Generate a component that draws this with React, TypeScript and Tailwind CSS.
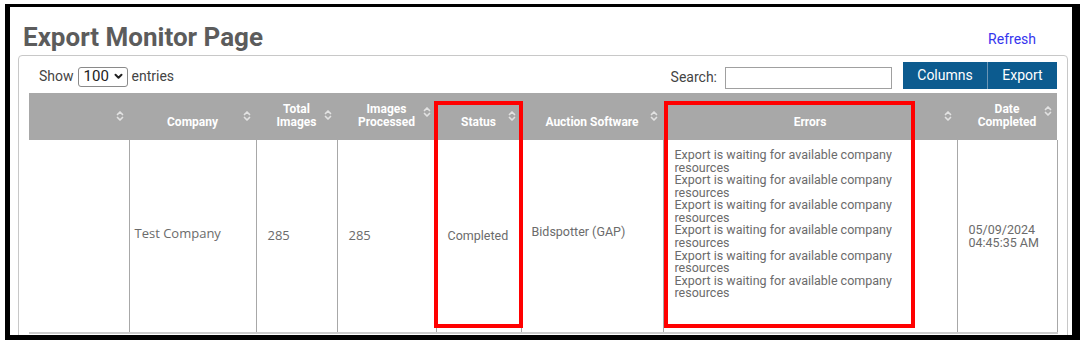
import React from "react";

const SortIcon = ({ top }: { top: number }) => (
  <svg
    width="8"
    height="12"
    viewBox="0 0 8 12"
    className="absolute right-[5px]"
    style={{ top }}
    fill="none"
    stroke="#e2e2e2"
    strokeWidth="1.7"
    strokeLinecap="round"
    strokeLinejoin="round"
  >
    <path d="M1.5 4.5 L4 2 L6.5 4.5" />
    <path d="M1.5 7.5 L4 10 L6.5 7.5" />
  </svg>
);

type Col = { label: React.ReactNode; w: number; icon: number };

const cols: Col[] = [
  { label: "", w: 100, icon: 23 },
  { label: "Company", w: 127, icon: 23 },
  { label: <>Total<br />Images</>, w: 81, icon: 22 },
  { label: <>Images<br />Processed</>, w: 99, icon: 19 },
  { label: "Status", w: 85, icon: 23 },
  { label: "Auction Software", w: 142, icon: 23 },
  { label: "Errors", w: 294, icon: 23 },
  { label: <>Date<br />Completed</>, w: 100, icon: 18 },
];

export default function App() {
  const errors = Array.from({ length: 6 });
  return (
    <div className="w-[1084px] h-[342px] bg-white pt-[4px] pl-[5px] overflow-hidden">
      <div
        className="relative w-[1075px] h-[336px] border-black border-l-[5px] border-t-[3px] border-r-[8px] border-b-[5px] overflow-hidden bg-white"
        style={{ fontFamily: "Roboto, 'Liberation Sans', sans-serif" }}
      >
        {/* Title row */}
        <div className="flex items-baseline justify-between pl-[13px] pr-[36px] pt-[15px]">
          <h1 className="text-[26px] font-bold leading-[30px] text-[#5c5c5c]">
            Export Monitor Page
          </h1>
          <a className="relative -top-[2px] text-[14px] text-[#3535ee] leading-[16px] cursor-pointer">Refresh</a>
        </div>

        {/* Panel */}
        <div className="mt-[3px] ml-[8px] w-[1050px] h-[300px] border border-[#c8c8c8] rounded-[4px] px-[10px] pt-[6px]">
          <div className="flex items-end justify-between h-[27px] mb-[4px]">
            <div className="flex items-center pl-[10px] pb-[2px] text-[14px] text-[#444]">
              <span>Show</span>
              <div className="ml-[4px] flex items-center justify-between w-[50px] h-[20px] border border-[#8a8a8a] rounded-[3px] pl-[5px] pr-[4px] text-[#222] text-[15px]">
                <span>100</span>
                <svg width="9" height="7" viewBox="0 0 9 7" fill="none" stroke="#222" strokeWidth="2" strokeLinecap="round" strokeLinejoin="round">
                  <path d="M1.5 1.8 L4.5 4.8 L7.5 1.8" />
                </svg>
              </div>
              <span className="ml-[4px]">entries</span>
            </div>
            <div className="flex items-end">
              <span className="text-[14px] text-[#444] mb-[1px]">Search:</span>
              <div className="ml-[8px] w-[167px] h-[22px] border border-[#a0a0a0] bg-white" />
              <div className="ml-[11px] flex h-[27px]">
                <div className="w-[84px] h-full bg-[#0c5b8f] text-white text-[14px] flex items-center justify-center">
                  Columns
                </div>
                <div className="w-[70px] h-full bg-[#0c5b8f] border-l border-[#6a95b5] text-white text-[14px] flex items-center justify-center">
                  Export
                </div>
              </div>
            </div>
          </div>

          <table className="table-fixed w-[1028px] border-collapse">
            <colgroup>
              {cols.map((c, i) => (
                <col key={i} style={{ width: c.w }} />
              ))}
            </colgroup>
            <thead>
              <tr className="h-[47px] bg-[#a8a8a8]">
                {cols.map((c, i) => (
                  <th
                    key={i}
                    className="relative align-bottom pb-[11px] px-[4px] text-[12px] font-bold leading-[13px] text-white text-center"
                  >
                    {c.label}
                    <SortIcon top={c.icon - 6} />
                  </th>
                ))}
              </tr>
            </thead>
            <tbody>
              <tr className="h-[193px] border-b-2 border-[#cccccc] text-[#6b6b6b]">
                <td className="align-middle" />
                <td
                  className="align-middle border-l border-[#a8a8a8] pl-[5px] pb-[5px] text-[13px]"
                  style={{ fontFamily: "'Open Sans', sans-serif" }}
                >
                  Test Company
                </td>
                <td
                  className="align-middle border-l border-[#a8a8a8] pl-[11px] text-[13px]"
                  style={{ fontFamily: "'Open Sans', sans-serif" }}
                >
                  285
                </td>
                <td
                  className="align-middle border-l border-[#a8a8a8] pl-[11px] text-[13px]"
                  style={{ fontFamily: "'Open Sans', sans-serif" }}
                >
                  285
                </td>
                <td className="align-middle border-l border-[#a8a8a8] pl-[11px] text-[12.5px]">
                  Completed
                </td>
                <td className="align-middle border-l border-[#a8a8a8] pl-[10px] pb-[8px] text-[12.5px]">
                  Bidspotter (GAP)
                </td>
                <td className="align-top border-l border-[#a8a8a8] pl-[11px] pt-[9px] text-[12.5px] leading-[12.57px]">
                  <div className="w-[240px]">
                    {errors.map((_, i) => (
                      <div key={i}>Export is waiting for available company resources</div>
                    ))}
                  </div>
                </td>
                <td className="align-middle border-l border-r border-[#a8a8a8] pl-[11px] text-[12.5px] leading-[13px]">
                  05/09/2024
                  <br />
                  04:45:35 AM
                </td>
              </tr>
            </tbody>
          </table>
        </div>

        {/* Annotation boxes */}
        <div className="absolute left-[424px] top-[94px] w-[89px] h-[227px] border-[4px] border-[#ff0000]" />
        <div className="absolute left-[654px] top-[94px] w-[251px] h-[227px] border-[4px] border-[#ff0000]" />
      </div>
    </div>
  );
}
